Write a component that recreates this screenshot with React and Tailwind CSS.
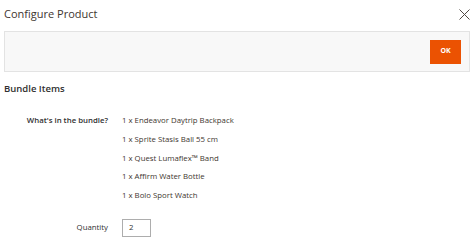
export default function App() {
  const items = [
    '1 x Endeavor Daytrip Backpack',
    '1 x Sprite Stasis Ball 55 cm',
    '1 x Quest Lumaflex™ Band',
    '1 x Affirm Water Bottle',
    '1 x Bolo Sport Watch',
  ];

  return (
    <div className="w-[474px] h-[245px] bg-white overflow-hidden font-['Open_Sans',sans-serif] text-[#303030]">
      {/* Header */}
      <div className="flex items-center justify-between pl-[4px] pr-[4px] pt-[7px]">
        <h1 className="text-[11px] leading-[14px] text-[#41362f]">Configure Product</h1>
        <button className="text-[#514943]">
          <svg width="11" height="11" viewBox="0 0 11 11" fill="none" stroke="currentColor" strokeWidth="1">
            <path d="M0.5 0.5 L10.5 10.5 M10.5 0.5 L0.5 10.5" />
          </svg>
        </button>
      </div>

      {/* Action bar */}
      <div className="mx-[4px] mt-[10px] h-[41px] flex items-center justify-end pr-[8px] bg-[#f8f8f8] border border-[#e3e3e3]">
        <button className="w-[31px] h-[24px] bg-[#eb5202] text-white text-[7px] font-bold">OK</button>
      </div>

      {/* Bundle items */}
      <h2 className="mt-[10px] pl-[4px] text-[9.5px] leading-[14px] font-semibold text-[#303030]">Bundle Items</h2>

      <div className="mt-[15px] flex gap-[14px]">
        <div className="w-[108px] text-right text-[7.8px] leading-[18.75px] font-semibold">What's in the bundle?</div>
        <div className="flex flex-col text-[7.8px] leading-[18.75px] text-[#41362f]">
          {items.map((item) => (
            <div key={item}>{item}</div>
          ))}
        </div>
      </div>

      <div className="mt-[14px] flex items-center gap-[14px]">
        <div className="w-[108px] text-right text-[7.8px]">Quantity</div>
        <div className="w-[29px] h-[18px] border border-[#adadad] flex items-center pl-[6px] text-[7.8px] text-[#303030]">2</div>
      </div>
    </div>
  );
}
